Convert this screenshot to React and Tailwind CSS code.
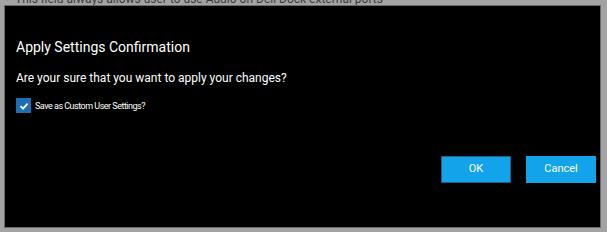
import React, { useState } from 'react'

export default function App() {
  const [saveCustom, setSaveCustom] = useState(true)

  return (
    <div className="relative w-[607px] h-[232px] overflow-hidden bg-[#a3a3a3] font-['Roboto',sans-serif]">
      <p className="absolute left-[15px] top-[-8px] text-[12px] leading-[14px] text-[#3a3a3a]">
        This field always allows user to use Audio on Dell Dock external ports
      </p>
      <div className="absolute left-[4px] top-[5px] w-[597px] h-[223px] bg-black border border-[#6b6b6b] flex flex-col">
        <h2 className="mt-[32px] ml-[11px] text-[14px] leading-[18px] text-white">Apply Settings Confirmation</h2>
        <p className="mt-[15px] ml-[11px] text-[12px] leading-[14px] text-white">
          Are your sure that you want to apply your changes?
        </p>
        <label className="mt-[13px] ml-[11px] flex items-center gap-[4px] cursor-pointer">
          <button
            type="button"
            onClick={() => setSaveCustom(!saveCustom)}
            className="w-[15px] h-[15px] bg-[#1c6fb3] flex items-center justify-center"
          >
            {saveCustom && (
              <svg width="10" height="10" viewBox="0 0 10 10">
                <path d="M1.5 5.2 L4 7.6 L8.6 2.6" fill="none" stroke="white" strokeWidth="1.8" />
              </svg>
            )}
          </button>
          <span className="text-[9px] leading-[12px] tracking-[-0.5px] text-white">Save as Custom User Settings?</span>
        </label>
        <div className="flex justify-end gap-[15px] mt-[43px] mr-[4px]">
          <button className="w-[70px] h-[27px] bg-[#12a3ea] border border-[#1f5f80] text-white text-[11px]">OK</button>
          <button className="w-[70px] h-[27px] bg-[#12a3ea] text-white text-[11px]">Cancel</button>
        </div>
      </div>
    </div>
  )
}
